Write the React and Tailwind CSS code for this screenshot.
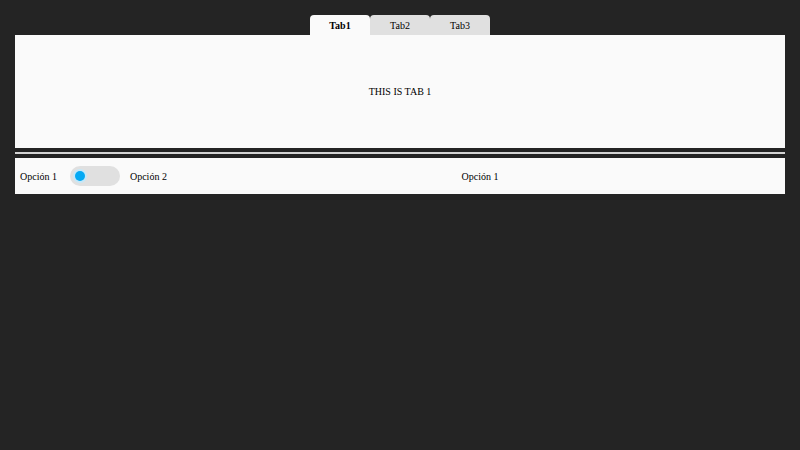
import { useState } from "react";

const tabs = ["Tab1", "Tab2", "Tab3"];

export default function App() {
  const [active, setActive] = useState(0);
  const [second, setSecond] = useState(false);

  return (
    <div
      className="w-[800px] h-[450px] bg-[#242424] px-[15px] pt-[15px] text-[10px] text-black"
      style={{ fontFamily: '"Liberation Serif", "Times New Roman", serif' }}
    >
      <div className="flex justify-center">
        {tabs.map((t, i) => (
          <button
            key={t}
            onClick={() => setActive(i)}
            className={
              i === active
                ? "w-[60px] h-[20px] rounded-t-[4px] bg-[#fafafa] font-bold"
                : "w-[60px] h-[20px] rounded-t-[4px] bg-[#e0e0e0]"
            }
          >
            {t}
          </button>
        ))}
      </div>

      <div className="h-[113px] bg-[#fafafa] flex items-center justify-center">
        THIS IS {tabs[active].replace("Tab", "TAB ")}
      </div>

      <div className="h-[2px] bg-[#d4d4d4] mt-[4px]" />

      <div className="mt-[4px] h-[36px] bg-[#fafafa] flex items-center pl-[5px]">
        <span>Opción 1</span>
        <button
          onClick={() => setSecond(!second)}
          className="ml-[13px] w-[50px] h-[20px] rounded-full bg-[#e0e0e0] flex items-center px-[5px]"
        >
          <span
            className={
              second
                ? "ml-auto w-[10px] h-[10px] rounded-full bg-[#03a9f4] ring-2 ring-[#c6e8f8]"
                : "w-[10px] h-[10px] rounded-full bg-[#03a9f4] ring-2 ring-[#c6e8f8]"
            }
          />
        </button>
        <span className="ml-[10px]">Opción 2</span>
        <div className="flex-1 text-center pl-[8px]">{second ? "Opción 2" : "Opción 1"}</div>
      </div>
    </div>
  );
}
